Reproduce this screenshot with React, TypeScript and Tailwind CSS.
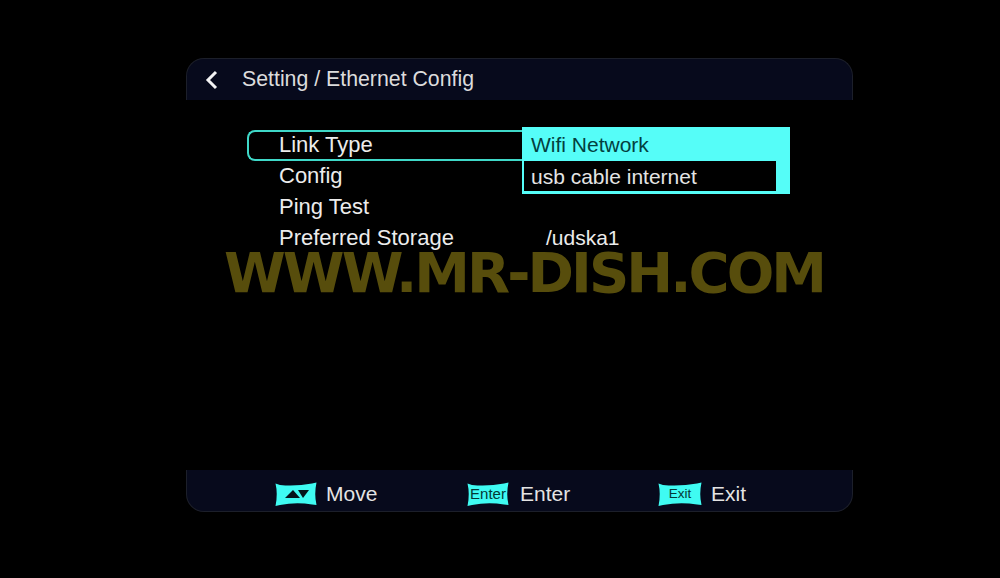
import React from "react";

function KeyShape({ w, h = 24, children }: { w: number; h?: number; children?: React.ReactNode }) {
  return (
    <svg width={w} height={h} viewBox={`0 0 ${w} ${h}`} className="block">
      <path
        d={`M0.5 1.5 L5 3 Q${w / 2} 4.5 ${w - 5} 1.5 L${w - 0.5} 0.5 Q${w - 3} ${h / 2} ${w - 0.5} ${h - 1} L${w - 5} ${h - 1.5} Q${w / 2} ${h - 4} 5 ${h - 1} L0.5 ${h} Q3 ${h / 2} 0.5 1.5 Z`}
        fill="#3ffbf2"
      />
      {children}
    </svg>
  );
}

function FooterItem({ icon, label, className }: { icon: React.ReactNode; label: string; className: string }) {
  return (
    <div className={`flex items-center ${className}`}>
      {icon}
      <span className="text-[21px] leading-none text-[#e4e4e4]">{label}</span>
    </div>
  );
}

function Row({ label, value }: { label: string; value?: string }) {
  return (
    <div className="flex h-[31px] items-center pb-[2px] text-[22px] leading-none text-[#ececec]">
      <span className="w-[267px] shrink-0">{label}</span>
      {value && <span className="text-[21px]">{value}</span>}
    </div>
  );
}

export default function App() {
  return (
    <div className="relative h-[578px] w-[1000px] overflow-hidden bg-black font-['Liberation_Sans',Arial,sans-serif]">
      <div className="ml-[186px] flex h-full w-[667px] flex-col pt-[58px] pb-[66px]">
        <header className="flex h-[42px] items-center rounded-t-[18px] border-t border-r border-l border-[#1c1f2a] bg-[#070a1c] pl-[18px]">
          <svg width="14" height="20" viewBox="0 0 14 20" className="mr-[23px]">
            <path d="M11 2 L3 10 L11 18" fill="none" stroke="#f4f4f4" strokeWidth="3" />
          </svg>
          <span className="pt-[1px] text-[21.3px] leading-none text-[#dcdcdc]">Setting / Ethernet Config</span>
        </header>

        <main className="flex-1 pt-[30px] pl-[61px]">
          <div className="h-[31px] w-[276px] rounded-l-[8px] border-y-2 border-l-2 border-[#3fd8c8] pl-[30px]">
            <div className="-mt-[2px]">
              <Row label="Link Type" />
            </div>
          </div>
          <div className="pl-[32px]">
            <Row label="Config" />
            <Row label="Ping Test" />
            <Row label="Preferred Storage" value="/udska1" />
          </div>
        </main>

        <footer className="flex h-[42px] items-center rounded-b-[18px] border-r border-b border-l border-[#1c1f2a] bg-[#070a1c] pt-[6px] pl-[88px]">
          <FooterItem
            className="w-[192px] gap-[9px]"
            label="Move"
            icon={
              <KeyShape w={42}>
                <path d="M18 8 L10 16 L25 16 Z M23 8 L34 8 L28 16 Z" fill="#04141a" />
              </KeyShape>
            }
          />
          <FooterItem
            className="w-[191px] gap-[11px]"
            label="Enter"
            icon={
              <div className="relative">
                <KeyShape w={42} />
                <span className="absolute inset-0 flex items-center justify-center text-[15px] leading-none text-[#043836]">Enter</span>
              </div>
            }
          />
          <FooterItem
            className="gap-[9px]"
            label="Exit"
            icon={
              <div className="relative">
                <KeyShape w={44} />
                <span className="absolute inset-0 flex items-center justify-center text-[13.5px] leading-none text-[#043836]">Exit</span>
              </div>
            }
          />
        </footer>
      </div>

      <div className="absolute top-[127px] left-[522px] h-[67px] w-[268px] bg-[#55fdf8]">
        <div className="flex h-[34px] items-center pt-[1px] pl-[9px] text-[21px] leading-none text-[#033f3f]">Wifi Network</div>
        <div className="ml-[2px] flex h-[30px] w-[252px] items-center bg-black pl-[7px] text-[21px] leading-none text-[#e4e4e4]">
          usb cable internet
        </div>
      </div>

      <div className="absolute top-[240px] left-[224px] font-['DejaVu_Sans',sans-serif] text-[56px] leading-[66px] font-bold tracking-[-2.95px] whitespace-nowrap text-[#574d0c]">
        WWW.MR-DISH.COM
      </div>
    </div>
  );
}
